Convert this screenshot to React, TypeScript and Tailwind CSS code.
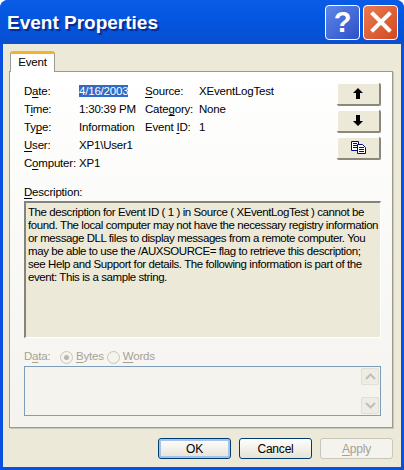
import React from 'react';

const ui = "font-['Liberation_Sans',Arial,sans-serif]";

const infoRows = [
  { label: 'Date:', key: 'a', value: '4/16/2003', label2: 'Source:', key2: 'S', value2: 'XEventLogTest' },
  { label: 'Time:', key: 'i', value: '1:30:39 PM', label2: 'Category:', key2: 'g', value2: 'None' },
  { label: 'Type:', key: 'p', value: 'Information', label2: 'Event ID:', key2: 'I', value2: '1' },
  { label: 'User:', key: 'U', value: 'XP1\\User1' },
  { label: 'Computer:', key: 'o', value: 'XP1' },
];

const description = [
  'The description for Event ID ( 1 ) in Source ( XEventLogTest ) cannot be',
  'found. The local computer may not have the necessary registry information',
  'or message DLL files to display messages from a remote computer. You',
  'may be able to use the /AUXSOURCE= flag to retrieve this description;',
  'see Help and Support for details. The following information is part of the',
  'event: This is a sample string.',
];

// underline the access key letter like a win32 label
const Hot = ({ text, k }: { text: string; k?: string }) => {
  const i = k ? text.indexOf(k) : -1;
  if (i < 0) return <>{text}</>;
  return (
    <>
      {text.slice(0, i)}
      <span className="underline underline-offset-2">{text[i]}</span>
      {text.slice(i + 1)}
    </>
  );
};

const SideButton = ({ children }: { children: React.ReactNode }) => (
  <button className="flex h-[23px] w-[44px] items-center justify-center rounded-[2px] border-r-2 border-b-2 border-r-[#8a877c] border-b-[#8a877c] bg-[#ece9d8] shadow-[inset_1px_1px_0_#fff]">
    {children}
  </button>
);

const FooterButton = ({ children, variant }: { children: React.ReactNode; variant?: 'default' | 'disabled' }) => {
  const cls =
    variant === 'disabled'
      ? 'border-[#c9c7ba] bg-[#f4f3ee] text-[#a5a294]'
      : variant === 'default'
        ? 'border-[#003c74] bg-gradient-to-b from-white to-[#e6e3d6] text-black shadow-[inset_0_0_0_2px_#a9c3e8]'
        : 'border-[#003c74] bg-gradient-to-b from-white to-[#e6e3d6] text-black';
  return <button className={`h-[21px] w-[73px] rounded-[3px] border text-[12px] leading-none ${cls}`}>{children}</button>;
};

export default function App() {
  return (
    <div className={`${ui} flex h-[470px] w-[404px] flex-col overflow-hidden rounded-t-[8px] bg-[#0a50e0] text-[11.5px] tracking-[-0.2px] text-black`}>
      {/* title bar */}
      <div className="flex h-[44px] shrink-0 items-center justify-between bg-gradient-to-b from-[#0a5ce6] via-[#0355e0] to-[#0a4fd0] pl-[7px] pr-[6px]">
        <div className="text-[19px] font-bold leading-none tracking-[0px] text-white [text-shadow:2px_2px_1px_#0a2a8c]">Event Properties</div>
        <div className="flex gap-[3px]">
          <div className="flex h-[35px] w-[35px] items-center justify-center rounded-[4px] border border-white bg-gradient-to-br from-[#5f86e8] to-[#2c50c8] text-[29px] font-bold leading-none text-white">?</div>
          <div className="flex h-[35px] w-[35px] items-center justify-center rounded-[4px] border border-white bg-gradient-to-br from-[#ec7a50] to-[#d2481c]">
            <svg width="22" height="22" viewBox="0 0 22 22">
              <path d="M3 3 L19 19 M19 3 L3 19" stroke="#fff" strokeWidth="4" strokeLinecap="square" />
            </svg>
          </div>
        </div>
      </div>

      {/* dialog body */}
      <div className="mb-[3px] ml-[3px] mr-[3px] flex min-h-0 flex-1 flex-col bg-[#ece9d8] pl-[6px] pr-[8px] pt-[7px]">
        {/* tab strip */}
        <div className="z-10 -mb-px flex pl-[1px]">
          <div className="h-[21px] w-[45px] rounded-t-[3px] border-x border-[#9c9b91] border-t-[3px] border-t-[#f6b12f] bg-white pt-[1px] text-center leading-[15px]">Event</div>
        </div>

        {/* tab panel */}
        <div className="flex h-[357px] flex-col border border-[#9c9b91] bg-gradient-to-b from-white to-[#f4f3ee] pl-[14px] pr-[11px] pt-[11px] shadow-[1px_1px_0_#c9c7ba]">
          <div className="flex justify-between">
            <div className="flex flex-col gap-[4px] pt-[1px]">
              {infoRows.map((r) => (
                <div key={r.label} className="flex h-[14px] items-center leading-[14px]">
                  <div className="w-[55px]"><Hot text={r.label} k={r.key} /></div>
                  <div className="w-[66px]">
                    {r.value === '4/16/2003' ? <span className="bg-[#316ac5] text-white">{r.value}</span> : r.value}
                  </div>
                  {r.label2 && <div className="w-[54px]"><Hot text={r.label2} k={r.key2} /></div>}
                  {r.value2 && <div>{r.value2}</div>}
                </div>
              ))}
            </div>
            <div className="flex flex-col gap-[4px]">
              <SideButton>
                <svg width="10" height="11" viewBox="0 0 10 11"><path d="M5 0 L10 5 H7 V11 H3 V5 H0 Z" fill="#000" /></svg>
              </SideButton>
              <SideButton>
                <svg width="10" height="11" viewBox="0 0 10 11"><path d="M5 11 L10 6 H7 V0 H3 V6 H0 Z" fill="#000" /></svg>
              </SideButton>
              <SideButton>
                <svg width="15" height="13" viewBox="0 0 15 13" fill="#fff" stroke="#000b7a" strokeWidth="1">
                  <path d="M0.5 0.5 H7.5 V9.5 H0.5 Z" />
                  <path d="M2 2.5 H6 M2 4.5 H6 M2 6.5 H6" />
                  <path d="M6.5 3.5 H11.5 L14.5 6.5 V12.5 H6.5 Z" />
                  <path d="M8 6.5 H13 M8 8.5 H13 M8 10.5 H13" />
                </svg>
              </SideButton>
            </div>
          </div>

          <div className="mt-[15px] leading-[14px]"><Hot text="Description:" k="D" /></div>
          <div className="mt-[2px] h-[137px] w-[357px] border-t-2 border-l-2 border-t-[#85847a] border-l-[#85847a] border-r border-b border-r-white border-b-white bg-[#ece9d8] pl-[2px] pt-[3px] leading-[13px] tracking-[-0.42px] whitespace-nowrap">
            {description.map((line) => (
              <div key={line}>{line}</div>
            ))}
          </div>

          <div className="mt-[11px] flex h-[16px] items-center text-[#a5a294]">
            <div className="w-[35px]"><Hot text="Data:" k="a" /></div>
            <div className="ml-[1px] flex items-center gap-[2px]">
              <span className="flex h-[13px] w-[13px] items-center justify-center rounded-full border border-[#c9c7ba] bg-[#f4f3ee]">
                <span className="h-[5px] w-[5px] rounded-full bg-[#b8b6aa]" />
              </span>
              <span className="ml-[1px]"><Hot text="Bytes" k="B" /></span>
            </div>
            <div className="ml-[3px] flex items-center gap-[2px]">
              <span className="h-[13px] w-[13px] rounded-full border border-[#c9c7ba] bg-[#f4f3ee]" />
              <span className="ml-[1px]"><Hot text="Words" k="W" /></span>
            </div>
          </div>

          <div className="mt-[1px] flex h-[50px] w-[357px] justify-end border border-[#7f9db9] bg-[#f4f3ee]">
            <div className="flex w-[18px] flex-col justify-between py-[1px] mr-[1px]">
              <div className="flex h-[17px] items-center justify-center rounded-[2px] border border-[#e2e0d4] bg-[#eeece4]">
                <svg width="11" height="7" viewBox="0 0 11 7"><path d="M1 6 L5.5 1.5 L10 6" fill="none" stroke="#c2c0b4" strokeWidth="2" /></svg>
              </div>
              <div className="flex h-[17px] items-center justify-center rounded-[2px] border border-[#e2e0d4] bg-[#eeece4]">
                <svg width="11" height="7" viewBox="0 0 11 7"><path d="M1 1 L5.5 5.5 L10 1" fill="none" stroke="#c2c0b4" strokeWidth="2" /></svg>
              </div>
            </div>
          </div>
        </div>

        {/* footer buttons */}
        <div className="mt-[10px] flex justify-end gap-[8px]">
          <FooterButton variant="default">OK</FooterButton>
          <FooterButton>Cancel</FooterButton>
          <FooterButton variant="disabled"><Hot text="Apply" k="A" /></FooterButton>
        </div>
      </div>
    </div>
  );
}
